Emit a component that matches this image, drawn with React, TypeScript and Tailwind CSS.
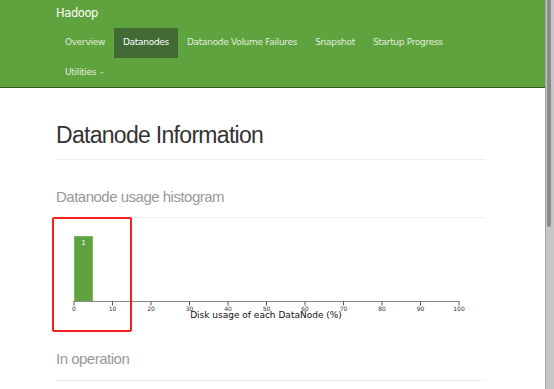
import React from "react";

const navFont = { fontFamily: '"DejaVu Sans", sans-serif' };

function NavTab({ label, active }: { label: string; active?: boolean }) {
  return (
    <div
      className={
        "h-[30px] flex items-center px-[9px] text-[9px] tracking-[-0.3px] " +
        (active ? "bg-[#416a35] text-white" : "text-[#e3edde]")
      }
    >
      {label}
    </div>
  );
}

function Chart() {
  const ticks = [0, 10, 20, 30, 40, 50, 60, 70, 80, 90, 100];
  return (
    <div className="relative h-[112px]">
      <svg width="429" height="112" className="block" style={{ fontFamily: '"DejaVu Sans", sans-serif' }}>
        <rect x="18.5" y="18.5" width="18" height="65" fill="#5fa33e" stroke="#7cb75f" strokeWidth="1" />
        <text x="27.5" y="27" fontSize="7" fill="#ffffff" textAnchor="middle">1</text>
        <line x1="17.5" y1="83.5" x2="403.5" y2="83.5" stroke="#8a8a8a" strokeWidth="1.2" />
        {ticks.map((t, i) => {
          const x = 18 + i * 38.5;
          return (
            <g key={t}>
              <line x1={x} y1="83.5" x2={x} y2="87.5" stroke="#555" strokeWidth="1" />
              <text x={x} y="93" fontSize="6" fill="#333" textAnchor="middle">{t}</text>
            </g>
          );
        })}
        <text x="210" y="100" fontSize="9" fill="#111" textAnchor="middle">Disk usage of each DataNode (%)</text>
      </svg>
      <div className="absolute left-[-4px] top-[-1px] w-[80px] h-[115px] border-2 border-[#f5201c] rounded-[2px]" />
    </div>
  );
}

export default function App() {
  return (
    <div className="w-[554px] h-[389px] overflow-hidden flex bg-white">
      <div className="flex-1 min-w-0">
        <div className="bg-[#5fa33e] border-b border-[#2f5a22] pl-[56px]" style={navFont}>
          <div className="h-[28px] flex items-center pb-[1px] text-[11.5px] tracking-[-0.4px] text-white">Hadoop</div>
          <div className="flex">
            <NavTab label="Overview" />
            <NavTab label="Datanodes" active />
            <NavTab label="Datanode Volume Failures" />
            <NavTab label="Snapshot" />
            <NavTab label="Startup Progress" />
          </div>
          <div className="h-[29px] flex items-center px-[9px] text-[9px] tracking-[-0.3px] text-[#e3edde]">
            Utilities
            <span className="ml-[4px] mt-[1px] w-0 h-0 border-t-[2px] border-t-[#a9cc97] border-x-[2.5px] border-x-transparent" />
          </div>
        </div>
        <div className="ml-[56px] w-[429px]" style={{ fontFamily: '"Liberation Sans", Arial, sans-serif' }}>
          <div className="mt-[34px] pb-[11px] border-b border-[#eeeeee]">
            <h1 className="text-[23px] leading-[26px] tracking-[-0.7px] text-[#333333]">Datanode Information</h1>
          </div>
          <div className="mt-[28px] pb-[12px] border-b border-[#eeeeee]">
            <h3 className="text-[15px] leading-[17px] tracking-[-0.5px] text-[#999999]">Datanode usage histogram</h3>
          </div>
          <Chart />
          <div className="mt-[20px] pb-[13px] border-b border-[#eeeeee]">
            <h3 className="text-[15px] leading-[17px] tracking-[-0.5px] text-[#999999]">In operation</h3>
          </div>
        </div>
      </div>
      <div className="w-[9px] shrink-0 bg-[#c6c6c6] border-l border-[#a3a3a3]">
        <div className="ml-[1px] w-[4px] h-[227px] bg-[#8b8b8b] rounded-b-[2px]" />
      </div>
    </div>
  );
}
